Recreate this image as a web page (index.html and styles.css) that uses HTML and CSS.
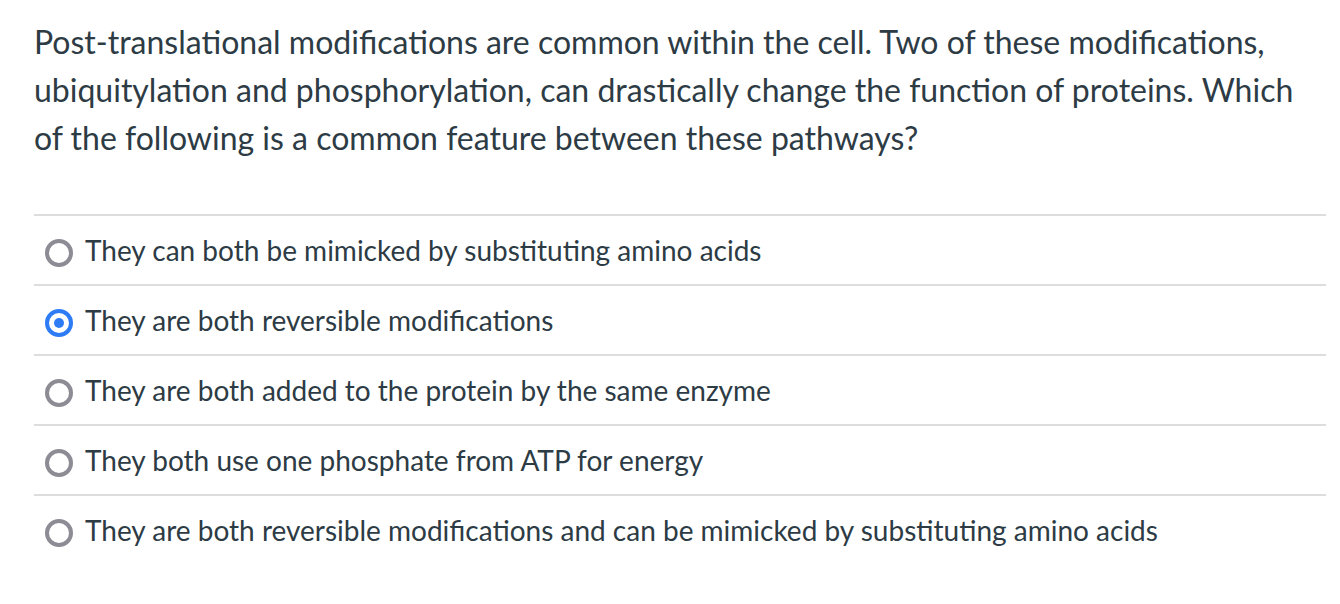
FILE: index.html
```
<!DOCTYPE html>
<html>
<head>
<meta charset="utf-8">
<link rel="stylesheet" href="styles.css">
</head>
<body>
<div class="quiz">
  <p class="question">Post-translational modifications are common within the cell. Two of these modifications, ubiquitylation and phosphorylation, can drastically change the function of proteins. Which of the following is a common feature between these pathways?</p>
  <div class="answers">
    <div class="answer"><span class="radio"></span><span class="label">They can both be mimicked by substituting amino acids</span></div>
    <div class="answer"><span class="radio checked"></span><span class="label">They are both reversible modifications</span></div>
    <div class="answer"><span class="radio"></span><span class="label">They are both added to the protein by the same enzyme</span></div>
    <div class="answer"><span class="radio"></span><span class="label">They both use one phosphate from ATP for energy</span></div>
    <div class="answer"><span class="radio"></span><span class="label">They are both reversible modifications and can be mimicked by substituting amino acids</span></div>
  </div>
</div>
</body>
</html>
```
FILE: styles.css
```
html, body {
  margin: 0;
  padding: 0;
  background: #ffffff;
}
.quiz {
  width: 1292px;
  padding: 18px 0 0 34px;
  font-family: Lato, "Open Sans", sans-serif;
  color: #2d3b45;
}
.question {
  margin: 0;
  font-size: 32px;
  line-height: 48px;
  width: 1280px;
}
.answers {
  margin-top: 52px;
}
.answer {
  display: flex;
  align-items: center;
  height: 68px;
  border-top: 2px solid #dddddd;
}
.radio {
  box-sizing: border-box;
  width: 28px;
  height: 28px;
  border-radius: 50%;
  border: 4px solid #8d8c95;
  margin: 6px 12px 0 11px;
  flex: none;
  display: flex;
  align-items: center;
  justify-content: center;
}
.radio.checked {
  border-color: #2d7cf6;
}
.radio.checked::after {
  content: "";
  width: 10px;
  height: 10px;
  border-radius: 50%;
  background: #2d7cf6;
}
.label {
  font-size: 28px;
  line-height: 34px;
}
```
